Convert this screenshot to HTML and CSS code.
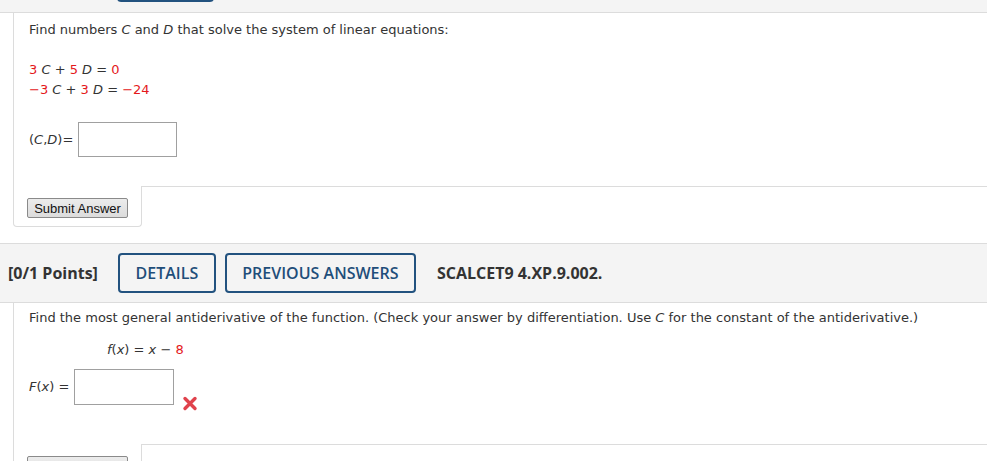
FILE: index.html
```html
<!DOCTYPE html>
<html>
<head>
<meta charset="utf-8">
<link rel="stylesheet" href="styles.css">
</head>
<body>
<div class="qheader stub">
  <span class="hbtn stub-btn"></span>
</div>
<section class="question">
  <div class="qbody q1">
    <p class="prompt">Find numbers <i>C</i> and <i>D</i> that solve the system of linear equations:</p>
    <div class="eqs">
      <div><span class="red">3</span> <i>C</i> + <span class="red">5</span> <i>D</i> = <span class="red">0</span></div>
      <div><span class="red">&minus;3</span> <i>C</i> + <span class="red">3</span> <i>D</i> = <span class="red">&minus;24</span></div>
    </div>
    <div class="answer-row">
      <span class="label">(<i>C</i>,<i>D</i>)=</span>
      <span class="ans a1"></span>
    </div>
  </div>
  <div class="submit-row">
    <div class="tab"><button class="submit">Submit Answer</button></div>
    <div class="fill"></div>
  </div>
</section>

<div class="qheader">
  <span class="points">[0/1 Points]</span>
  <span class="hbtn b-details">DETAILS</span>
  <span class="hbtn b-prev">PREVIOUS ANSWERS</span>
  <span class="ref">SCALCET9 4.XP.9.002.</span>
</div>
<section class="question">
  <div class="qbody q2">
    <p class="prompt">Find the most general antiderivative of the function. (Check your answer by differentiation. Use <i>C</i> for the constant of the antiderivative.)</p>
    <div class="func"><i>f</i>(<i>x</i>) = <i>x</i> &minus; <span class="red">8</span></div>
    <div class="answer-row r2">
      <span class="label"><i>F</i>(<i>x</i>) =</span>
      <span class="ans a2"></span>
      <svg class="xmark" width="16" height="15" viewBox="0 0 16 15"><path d="M3 2.5 L13 12.5 M13 2.5 L3 12.5" stroke="#e0424c" stroke-width="3.4" stroke-linecap="round"/></svg>
    </div>
  </div>
  <div class="submit-row">
    <div class="tab"><button class="submit">Submit Answer</button></div>
    <div class="fill"></div>
  </div>
</section>
</body>
</html>
```
FILE: styles.css
```css
html, body {
  margin: 0;
  padding: 0;
  background: #fff;
  overflow: hidden;
}
body {
  color: #333;
  font-family: "DejaVu Sans", Verdana, sans-serif;
}
.qheader {
  display: flex;
  align-items: center;
  background: #f4f4f4;
  border-top: 1px solid #dcdcdc;
  border-bottom: 1px solid #dcdcdc;
  padding: 9px 0 9px 8px;
  font-family: "Open Sans", sans-serif;
  font-size: 16px;
  font-weight: 700;
  color: #333;
  height: 40px;
}
.qheader.stub {
  border-top: none;
  height: 13px;
  padding: 0 0 0 117px;
  align-items: flex-end;
  overflow: hidden;
  box-sizing: border-box;
}
.stub-btn {
  width: 97px;
  flex: none;
  margin-bottom: 10px;
}
.points {
  margin-right: 20px;
}
.hbtn {
  display: flex;
  align-items: center;
  justify-content: center;
  box-sizing: border-box;
  height: 40px;
  padding: 0;
  border: 2px solid #22527f;
  border-radius: 4px;
  color: #1f4e7a;
  font-weight: 600;
  margin-right: 9px;
  background: #f4f4f4;
  flex: none;
}
.b-details { width: 98px; }
.b-prev { width: 191px; }
.ref {
  margin-left: 12px;
}
.question {
  margin-left: 13px;
  margin-bottom: 16px;
}
.qbody {
  border-left: 1px solid #dcdcdc;
  padding-left: 15px;
  font-size: 13px;
  line-height: 20px;
}
.q1 { padding-top: 7px; padding-bottom: 29px; }
.q2 { padding-top: 5px; padding-bottom: 39px; }
.prompt {
  margin: 0;
}
.eqs {
  margin-top: 20px;
}
.red { color: #e4181b; }
.answer-row {
  display: flex;
  align-items: center;
  margin-top: 22px;
}
.label { margin-right: 5px; }
.ans {
  display: block;
  box-sizing: border-box;
  border: 1px solid #a0a0a0;
  background: #fff;
}
.a1 { width: 99px; height: 35px; }
.a2 { width: 100px; height: 36px; }
.func {
  margin-top: 12px;
  padding-left: 78px;
}
.answer-row.r2 { margin-top: 9px; }
.xmark {
  align-self: flex-end;
  margin-left: 8px;
  margin-bottom: -6px;
}
.submit-row {
  display: flex;
}
.tab {
  flex: none;
  width: 129px;
  box-sizing: border-box;
  border-left: 1px solid #dcdcdc;
  border-right: 1px solid #dcdcdc;
  border-bottom: 1px solid #dcdcdc;
  border-radius: 0 0 4px 4px;
  padding: 12px 0 8px 13px;
}
.fill {
  flex: 1;
  border-top: 1px solid #dcdcdc;
}
.submit {
  display: block;
  box-sizing: border-box;
  width: 101px;
  height: 20px;
  padding: 0;
  margin: 0;
  font-family: "Liberation Sans", Arial, sans-serif;
  font-size: 13px;
  color: #111;
  background: linear-gradient(#ececec, #dcdcdc);
  border: 1px solid #8a8a8a;
  border-radius: 2px;
}
```
